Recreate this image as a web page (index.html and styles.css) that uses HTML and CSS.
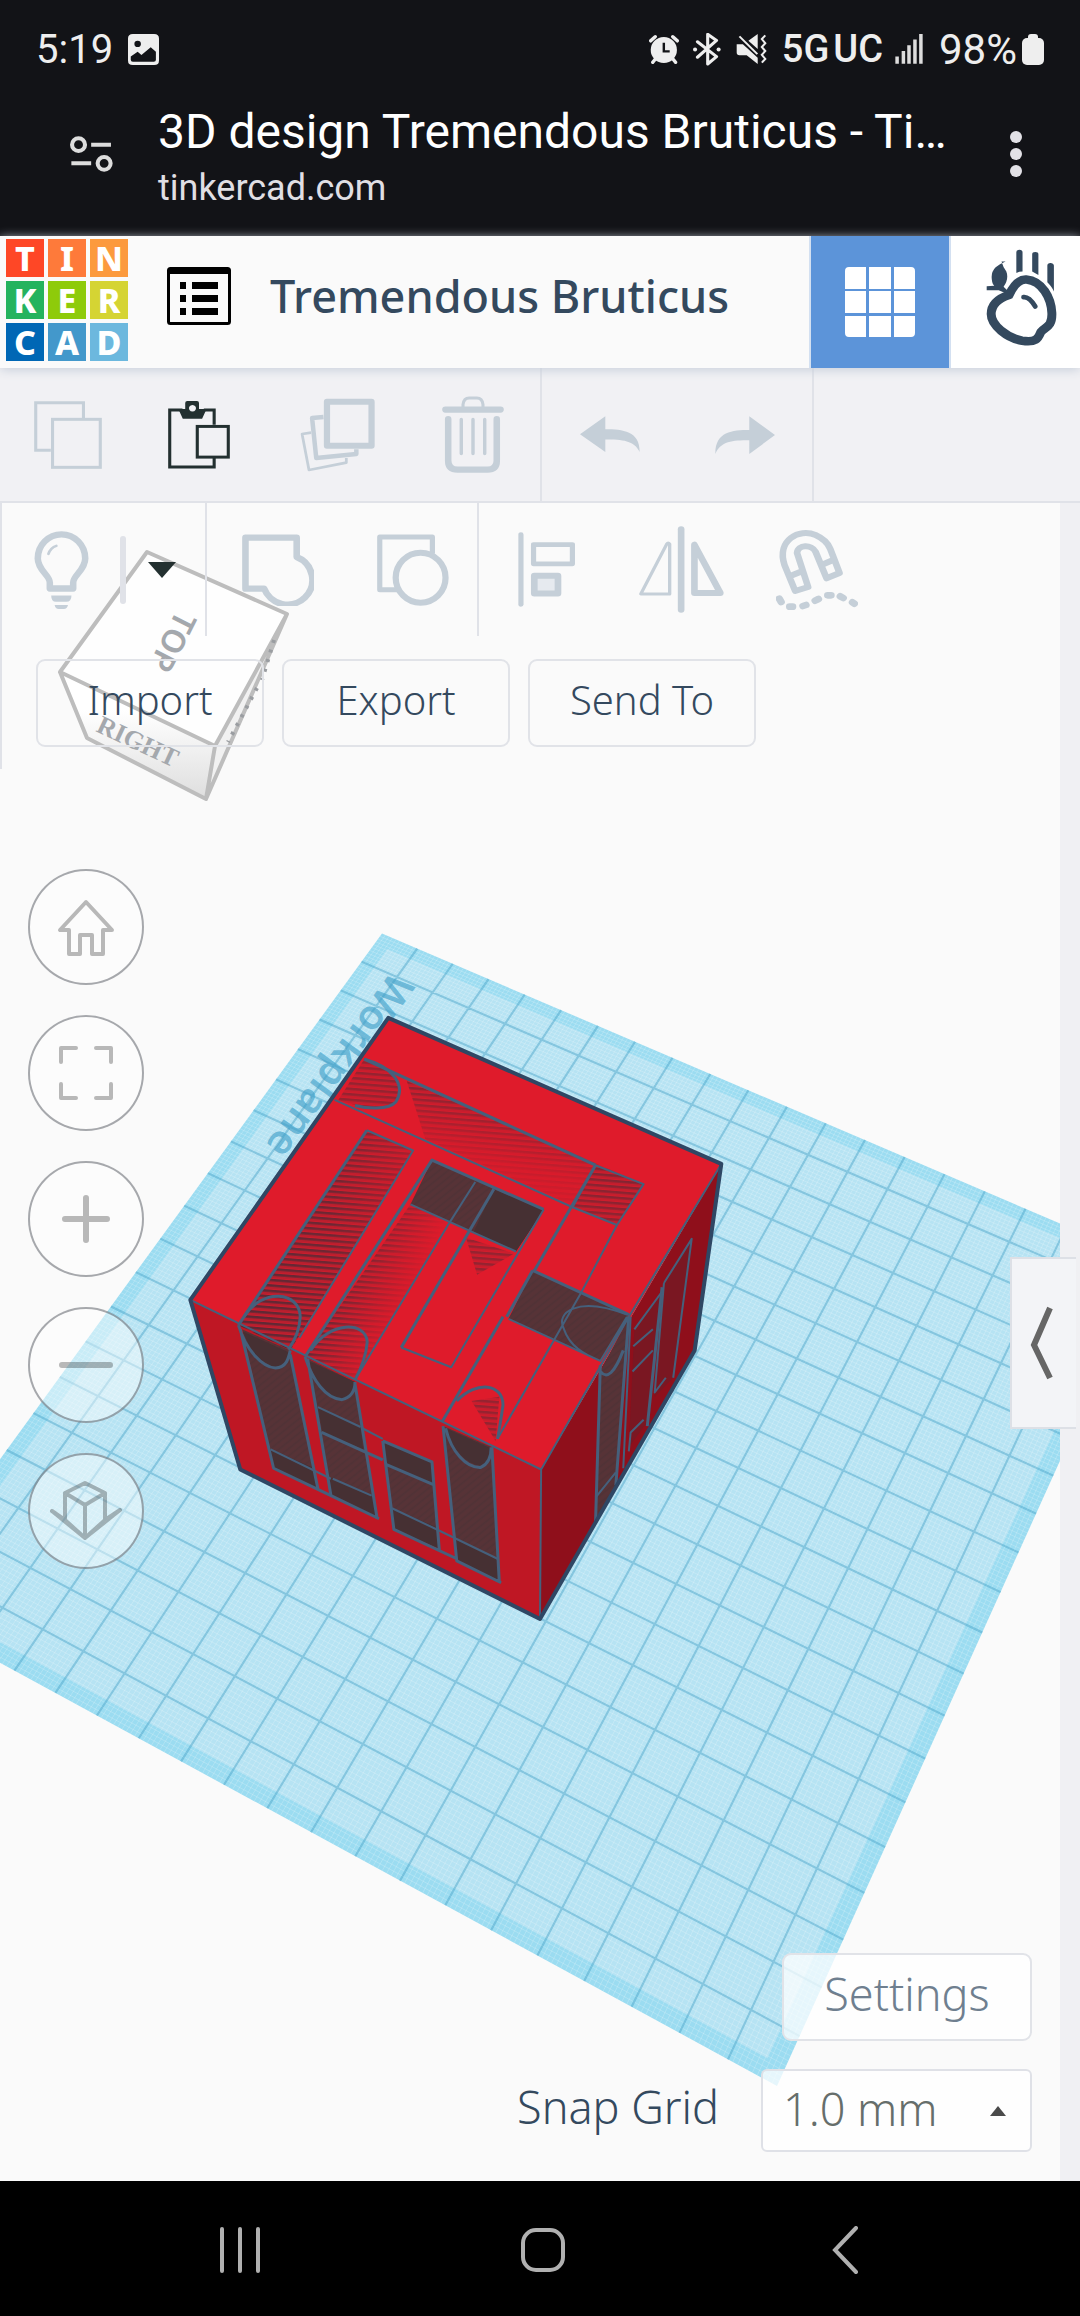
FILE: index.html
```html
<!DOCTYPE html>
<html lang="en">
<head>
<meta charset="utf-8">
<meta name="viewport" content="width=device-width">
<title>3D design Tremendous Bruticus - Tinkercad</title>
<link rel="stylesheet" href="styles.css">
</head>
<body>
<div class="browser">
  <div class="status">
    <span class="clock">5:19</span>
    <svg class="s-photo" viewBox="372 98 90 94" width="31" height="31" preserveAspectRatio="none"><path fill="#eee" fill-rule="evenodd" d="M386 98h62q14 0 14 14v66q0 14-14 14h-62q-14 0-14-14v-66q0-14 14-14zM380 166v10q0 6 6 6h61q6 0 6-6v-24l-15-14-27 24-11-10z"/><circle cx="400" cy="128" r="9.500" fill="#121317"/></svg>
    <span class="spacer"></span>
    <svg class="s-alarm" viewBox="318 102 87 88" width="30" height="30" preserveAspectRatio="none"><g stroke="#eee" stroke-width="10" stroke-linecap="round"><path d="M323 122l13-12M400 122l-13-12M336 176l-7 9M388 176l7 9"/></g><circle cx="361" cy="149" r="38" fill="#eee"/><path d="M361 128v25h17" fill="none" stroke="#121317" stroke-width="7"/></svg>
    <svg class="s-bt" viewBox="447 98 82 98" width="28" height="33" preserveAspectRatio="none"><path d="M460 124l56 44-26 22v-88l26 18-56 50" fill="none" stroke="#eee" stroke-width="9" stroke-linejoin="round" stroke-linecap="round"/><circle cx="453" cy="147" r="6" fill="#eee"/><circle cx="522" cy="147" r="6" fill="#eee"/></svg>
    <svg class="s-mute" viewBox="570 102 90 88" width="31" height="30" preserveAspectRatio="none"><path d="M572 132h18l43 40v18l-32-26h-21q-8 0-8-8zM606 122l27-20v44z" fill="#eee"/><path d="M580 109l52 52" stroke="#eee" stroke-width="6"/><path d="M655 106l-10 11 10 12-10 11 10 12-10 11 10 12-10 11" fill="none" stroke="#eee" stroke-width="6"/></svg>
    <span class="net"><b>5G</b><b>UC</b></span>
    <svg class="s-sig" viewBox="1018 102 80 88" width="28" height="30" preserveAspectRatio="none"><g stroke="#ddd" stroke-width="10"><path d="M1024 168v21M1042 152v37M1058 135v54"/><path d="M1075 118v71M1092 102v87"/></g></svg>
    <span class="pct">98%</span>
    <svg class="s-bat" viewBox="0 0 22 31" width="22" height="31"><rect x="6" width="10" height="8" rx="3" fill="#eee"/><rect y="4" width="22" height="27" rx="5" fill="#eee"/></svg>
  </div>
  <div class="urlbar">
    <button class="plain site" aria-label="Site settings"><svg viewBox="202 408 126 108" width="43" height="36" preserveAspectRatio="none"><g fill="none" stroke="#ddd" stroke-width="12"><circle cx="227" cy="434" r="19"/><circle cx="302" cy="490" r="19"/><path d="M264 434h58M206 490h58"/></g></svg></button>
    <div class="page-id"><div class="page-title">3D design Tremendous Bruticus - Ti…</div><div class="page-host">tinkercad.com</div></div>
    <button class="plain more" aria-label="Menu"><svg viewBox="0 0 12 46" width="12" height="46" fill="#e2e1e6"><circle cx="6" cy="6" r="6"/><circle cx="6" cy="23" r="6"/><circle cx="6" cy="40" r="6"/></svg></button>
  </div>
</div>

<header class="head">
  <a class="logo" href="#" aria-label="Tinkercad"><span class="t1">T</span><span class="t2">I</span><span class="t3">N</span><span class="t4">K</span><span class="t5">E</span><span class="t6">R</span><span class="t7">C</span><span class="t8">A</span><span class="t9">D</span></a>
  <button class="plain list" aria-label="My designs"><svg viewBox="0 0 64 58" width="64" height="58"><rect x="1.500" y="1.500" width="61" height="55" rx="2" fill="none" stroke="#000" stroke-width="3"/><path d="M1 1h62v6H1zM13 15h6v7h-6zM25 15h26v7H25zM13 28h6v7h-6zM25 28h26v7H25zM13 41h6v7h-6zM25 41h26v7H25z"/></svg></button>
  <h1>Tremendous Bruticus</h1>
  <button class="plain mode grid" aria-label="3D view"><svg viewBox="0 0 70 70" width="70" height="70" fill="#fff"><path d="M4 0h17v22H0V4q0-4 4-4zM24 0h22v22H24zM49 0h17q4 0 4 4v18H49zM0 24h21v22H0zM24 24h22v22H24zM49 24h21v22H49zM0 49h21v21H4q-4 0-4-4zM24 49h22v21H24zM49 49h21v17q0 4-4 4H49z"/></svg></button>
  <button class="plain mode sim" aria-label="Sim lab"><svg viewBox="1296 54 206 292" width="71" height="97" preserveAspectRatio="none"><path fill="#34495e" d="M1384 126V64q0-8 9-8t9 8v58q-10 0-18 4zM1430 122V70q0-7 9-7t9 7v62zM1474 154v-50q0-8 9-8t10 8v78q-4-12-19-28zM1341 92q4 16 14 30 8 22-8 46l12 12-4 8-22-10h-35v-12l22-1q-4-3-6-12-6-28 10-44 16-12 29-17z"/><path d="M1363 192q22-48 50-46c46 4 72 56 74 100 2 44-20 42-32 58-8 20-14 32-54 26-44-8-90-46-90-80 0-28 18-46 52-58z" fill="none" stroke="#34495e" stroke-width="26"/><path d="M1405 199q16-2 34 28" fill="none" stroke="#34495e" stroke-width="14" stroke-linecap="round"/></svg></button>
</header>

<nav class="tools tools-top" aria-label="Edit">
  <div class="group">
    <button class="plain tool" aria-label="Copy"><svg viewBox="97 514 198 204" width="68" height="68" preserveAspectRatio="none" fill="none" stroke="#c5cfd8" stroke-width="9"><path d="M146 662h-44V519h139v48"/><rect x="151" y="569" width="139" height="144"/></svg></button>
    <button class="plain tool paste" aria-label="Paste"><svg viewBox="488 513 180 206" width="62" height="68" preserveAspectRatio="none" fill="none" stroke="#233030" stroke-width="9"><path d="M530 540h-37v173h129v-30M622 585v-45h-30"/><path fill="#233030" stroke="none" fill-rule="evenodd" d="M518 537h20v-18q0-6 6-6h28q6 0 6 6v18h22l-13 30h-56zM559 525a10 10 0 1 0 .1 0z"/><rect x="573" y="590" width="90" height="93"/></svg></button>
    <button class="plain tool" aria-label="Duplicate"><svg viewBox="872 514 217 222" width="75" height="74" preserveAspectRatio="none" fill="none" stroke="#c5cfd8" stroke-linejoin="round"><rect x="950" y="525" width="129" height="132" stroke-width="18"/><path d="M940 571l-33 3 12 120 116-12v-14" stroke-width="13"/><path d="M904 618l-26 4 20 108 108-22v-14" stroke-width="8"/></svg></button>
    <button class="plain tool" aria-label="Delete"><svg viewBox="1282 494 180 236" width="62" height="78" preserveAspectRatio="none" fill="none" stroke="#c5cfd8" stroke-linecap="round"><path d="M1343 528v-8q2-20 18-20h22q16 0 18 20v8" stroke-width="9"/><path d="M1292 535h160M1300 564v126q0 27 27 27h87q27 0 27-27V564" stroke-width="19"/><path d="M1338 565v103M1372 565v103M1406 565v103" stroke-width="10"/></svg></button>
  </div>
  <div class="group">
    <button class="plain tool" aria-label="Undo"><svg viewBox="118 556 173 112" width="60" height="37" preserveAspectRatio="none" fill="#c5cfd8"><path d="M118 611l73-54v39c50 0 100 5 99 69-15-35-50-38-99-38v38z"/></svg></button>
    <button class="plain tool" aria-label="Redo"><svg viewBox="504 554 175 114" width="60" height="38" preserveAspectRatio="none" fill="#c5cfd8"><path d="M679 611l-75-56v41c-50 0-100 5-99 72 15-38 50-41 99-41v41z"/></svg></button>
  </div>
</nav>

<main class="workspace">
  <svg class="scene" viewBox="0 503 1060 1678" preserveAspectRatio="xMidYMid slice" aria-hidden="true">
    <defs>
      <pattern id="hatch" width="60" height="13" patternUnits="userSpaceOnUse" patternTransform="rotate(4)"><path d="M0 3h60" stroke="#26303a" stroke-width="6" stroke-opacity=".8"/><path d="M0 9h60" stroke="#26303a" stroke-width="6" stroke-opacity=".25"/></pattern>
      <pattern id="weave" width="14" height="14" patternUnits="userSpaceOnUse" patternTransform="rotate(-35)"><rect width="14" height="14" fill="#573337"/><path d="M0 4h14" stroke="#513236" stroke-width="5"/></pattern>
      <linearGradient id="fadeB" x1="0" y1="0" x2="1" y2="0"><stop offset="0" stop-color="#fff" stop-opacity=".9"/><stop offset=".55" stop-color="#fff" stop-opacity=".75"/><stop offset="1" stop-color="#fff" stop-opacity=".35"/></linearGradient>
      <linearGradient id="fadeA" x1="0" y1="1" x2=".35" y2="0"><stop offset="0" stop-color="#fff" stop-opacity="0"/><stop offset=".5" stop-color="#fff" stop-opacity=".15"/><stop offset="1" stop-color="#fff" stop-opacity=".7"/></linearGradient>
      <linearGradient id="fadeC" gradientUnits="userSpaceOnUse" x1="470" y1="700" x2="640" y2="790"><stop offset="0" stop-color="#fff" stop-opacity=".8"/><stop offset="1" stop-color="#fff" stop-opacity="0"/></linearGradient>
      <mask id="mB" maskUnits="userSpaceOnUse" x="0" y="0" width="1568" height="1568"><path fill="url(#fadeB)" d="M532 357L657 405 325 880 185 820z"/></mask>
      <mask id="mA" maskUnits="userSpaceOnUse" x="0" y="0" width="1568" height="1568"><path fill="url(#fadeA)" d="M640 240L1280 485 1208 582 690 378z"/><path fill="url(#fadeC)" d="M650 533L755 577 500 950 365 895z"/><path fill="#fff" fill-opacity=".5" d="M525 188C600 205 640 250 610 290 590 310 520 305 455 285zM1150 440L1280 485 1208 582 1088 540zM800 612L930 650 830 700zM815 1000L890 990 880 1095z"/></mask>
      <linearGradient id="cubeSide" x1="0" y1="0" x2="0" y2="1"><stop offset=".3" stop-color="#fff"/><stop offset="1" stop-color="#dedede"/></linearGradient>
    </defs>

    <g id="plane">
      <path fill="#9bdcf1" d="M382 933.500L1150 1262 777 2086-106 1605z"/>
      <path id="inner" fill="#b6e3f3"/>
      <path id="mesh" class="mesh"/>
      <path id="lines" class="lines"/>
      <text class="plane-name" transform="translate(392 970) rotate(126)">Workplane</text>
    </g>

    <g class="model" transform="translate(170 980) scale(.37 .4209)">
      <path fill="#df1b2b" d="M590 90L1490 437 1003 1163 55 760z"/>
      <path fill="#bf1724" d="M55 760L1003 1163 1000 1518 190 1163z"/>
      <path fill="#8f0f1b" d="M1490 437L1418 880 1000 1518 1003 1163z"/>
      <rect width="1568" height="1568" fill="url(#hatch)" mask="url(#mB)"/>
      <rect width="1568" height="1568" fill="url(#hatch)" mask="url(#mA)"/>
      <path fill="url(#weave)" d="M708 428L1010 545 935 645 650 533zM980 690L1240 795 1163 905 915 805zM195 830L325 880 400 1210 280 1160zM372 900L500 955 560 1280 435 1225zM575 1095L708 1145 725 1350 605 1305zM740 1060L870 1110 890 1430 775 1380zM1163 930L1238 805 1205 1200 1150 1285z"/>
      <path fill="#463033" d="M875 497L1010 545 935 645 820 600zM272 1115L390 1160 400 1210 280 1160zM400 1015L515 1062 522 1115 412 1075zM430 1180L550 1225 560 1280 435 1225zM575 1095L708 1145 715 1200 582 1150zM600 1255L720 1300 725 1350 605 1305zM772 1325L885 1375 890 1430 775 1380zM197 835L322 885C315 930 290 930 260 910 220 890 210 860 197 835zM374 905L500 955C495 1000 470 1005 440 990 400 970 385 930 374 905zM745 1065L865 1112C865 1155 840 1160 810 1145 770 1125 755 1090 745 1065z"/>
      <path fill="#741924" d="M1255 830L1330 740 1290 1050 1240 1110zM1335 720L1410 615 1360 945 1310 990z" opacity=".8"/>
      <g class="edge thick">
        <path d="M185 820L532 357M365 895L708 428 1010 545M525 188L1150 440M875 497L625 873M1150 440L985 690M900 800L735 1050M980 690L1240 795M980 690L910 800M185 820C205 880 250 920 285 922 315 920 320 900 325 880M365 895C385 950 420 995 465 997 495 990 500 970 500 955M745 1065C760 1120 800 1160 840 1158 860 1150 868 1130 868 1110M190 830L280 1160 435 1225M325 890L400 1210M372 900L435 1225 565 1280M500 960L560 1280M410 1075L575 1140M575 1095L708 1145 728 1355M575 1095L605 1305 775 1375M582 1150L715 1200M738 1060L775 1380 895 1432M870 1110L890 1430"/>
        <path d="M200 800C250 730 350 740 352 800Q350 840 320 878M380 880C430 810 530 810 533 860Q530 900 500 950M775 1000C830 950 900 960 900 1010Q890 1070 885 1090M1163 915L1150 1290M1240 800L1205 1200M1330 730L1290 1060M525 188C600 205 640 250 610 290 590 310 530 305 500 298M1163 930Q1190 960 1225 880"/>
      </g>
      <g class="edge">
        <path d="M1150 440L1280 485 1208 582 1110 745M445 285L1088 540 1208 582M1150 440L1088 540M532 357L657 405 350 850M825 480L755 577 500 950M650 533L935 645M1010 545L760 920 625 873M915 805L1163 905 1235 800M1110 745L885 1090M1235 795C1100 750 1040 790 1065 830 1080 870 1120 890 1163 905M272 1115L435 1185M400 1015L515 1062M440 1185L545 1225M520 1065L575 1090M600 1255L720 1305 885 1375M1240 800L1490 437M55 760L1003 1163 1240 800M1003 1163L1000 1518"/>
        <path d="M1335 720L1410 615 1360 945M1335 720L1310 980 1340 945M1255 830L1330 740M1252 870L1305 830M1250 930L1305 880M1240 1120L1245 1075 1280 1045M1245 800L1225 1160M1150 1230L1205 1170"/>
      </g>
      <path class="outline" d="M590 90L1490 437 1418 880 1000 1518 190 1163 55 760z"/>
    </g>

    <g class="cube">
      <path fill="url(#cubeSide)" d="M60 672L215 746 206 799 87 738z"/>
      <path fill="#f1f1f1" d="M287 614L215 746 206 799z"/>
      <path fill="#fefefe" d="M147 552L287 614 215 746 60 672z"/>
      <path class="cube-edge" d="M147 552L287 614 215 746 60 672zM60 672L87 738 206 799 215 746M287 614L206 799"/>
      <path d="M274 640L262 680M257 688L228 742" stroke="#9a9da1" stroke-width="4" stroke-dasharray="3 7"/>
      <text class="cube-top" transform="translate(177 609) rotate(117)">TOP</text>
      <text class="cube-right" transform="translate(95 731) rotate(25)">RIGHT</text>
    </g>
  </svg>

  <div class="sub">
    <div class="tools tools-low">
      <div class="group light">
        <button class="plain bulb" aria-label="Show all"><svg viewBox="98 98 160 236" width="55" height="78" preserveAspectRatio="none" fill="none" stroke="#c5cfd8"><path d="M144 272v-18c0-22-35-38-35-73a68 72 0 0 1 138 0c0 35-35 51-35 73v18z" stroke-width="19" stroke-linejoin="round"/><path d="M140 167q6-18 23-24" stroke-width="8" stroke-linecap="round"/><path fill="#c5cfd8" stroke="none" d="M148 293h59q0 19-15 19h-30q-14 0-14-19zM158 322h39q-3 12-12 12h-15q-10 0-12-12z"/></svg></button>
        <span class="bar"></span>
        <button class="plain caret" aria-label="More visibility options"><svg viewBox="0 0 28 16" width="28" height="16"><path d="M0 0h28L14 16z" fill="#233030"/></svg></button>
      </div>
      <div class="group pair">
        <button class="plain tool" aria-label="Group"><svg viewBox="698 118 208 216" width="72" height="72" preserveAspectRatio="none" fill="none" stroke="#c5cfd8" stroke-width="19" stroke-linejoin="round"><path d="M708 129h148v58a72 74 0 1 1-94 95h-54z"/></svg></button>
        <button class="plain tool" aria-label="Ungroup"><svg viewBox="1100 118 208 216" width="72" height="72" preserveAspectRatio="none" fill="none" stroke="#c5cfd8" stroke-linejoin="round"><path d="M1158 285h-50V127h152v50" stroke-width="15"/><ellipse cx="1226" cy="249" rx="72" ry="75" stroke-width="18"/></svg></button>
      </div>
      <div class="group last">
        <button class="plain tool" aria-label="Align"><svg viewBox="54 98 154 226" width="57" height="75" preserveAspectRatio="none" fill="none" stroke="#c5cfd8" stroke-linejoin="round"><path d="M62 106v210" stroke-width="14" stroke-linecap="round"/><rect x="96" y="136" width="105" height="58" stroke-width="14"/><rect x="98" y="230" width="64" height="53" stroke-width="18" fill="#e6eaef"/></svg></button>
        <button class="plain tool" aria-label="Mirror"><svg viewBox="376 84 230 260" width="85" height="87" preserveAspectRatio="none" fill="none" stroke="#c5cfd8" stroke-linejoin="round"><path d="M381 287h78V138q-4-6-8 0z" stroke-width="9"/><path d="M490 94v240" stroke-width="18" stroke-linecap="round"/><path d="M526 284h70L526 140z" stroke-width="18"/></svg></button>
        <button class="plain tool" aria-label="Snap"><svg viewBox="745 88 222 246" width="82" height="82" preserveAspectRatio="none" fill="none" stroke="#c5cfd8" stroke-linejoin="round"><path d="M797 274L768 196C746 120 808 86 852 106 876 118 886 130 892 148L917 220 882 236 852 156C842 134 804 134 802 160L832 262zM782 230l30-14M868 196l30-14" stroke-width="18"/><path d="M754 297l5 10M782 321h8M818 319l8-3M851 303l9-5M885 287h9M919 290l8 5M952 308l5 4" stroke-width="20" stroke-linecap="round"/></svg></button>
      </div>
    </div>
    <div class="actions">
      <button class="btn">Import</button>
      <button class="btn">Export</button>
      <button class="btn">Send To</button>
    </div>
  </div>

  <div class="camera">
    <button class="round" aria-label="Home view"><svg viewBox="0 0 58 58" width="58" height="58"><path d="M29 4L3 32h9v24h11V37h12v19h11V32h9z"/></svg></button>
    <button class="round" aria-label="Fit all in view"><svg viewBox="0 0 58 58" width="58" height="58"><path d="M4 18V4h15M39 4h15v14M54 40v14H39M19 54H4V40"/></svg></button>
    <button class="round" aria-label="Zoom in"><svg viewBox="0 0 58 58" width="58" height="58"><path d="M29 8v42M8 29h42" stroke-width="6"/></svg></button>
    <button class="round" aria-label="Zoom out"><svg viewBox="0 0 58 58" width="58" height="58"><path d="M5 29h48" stroke-width="6"/></svg></button>
    <button class="round" aria-label="Switch to flat view"><svg viewBox="0 0 72 62" width="72" height="62"><path d="M35 3L15 13v27l20 18 20-18V13zM15 13l20 12 20-12M35 25v33M15 40L2 31M55 40l15-10M2 31l33 27 35-28"/></svg></button>
  </div>

  <button class="plain drawer" aria-label="Open shapes panel"><svg viewBox="0 0 24 74" width="24" height="74"><path d="M20 2L4 39 20 72" fill="none" stroke="#666" stroke-width="6"/></svg></button>

  <div class="grid-controls">
    <button class="btn settings">Settings</button>
    <div class="snap">
      <label for="snap">Snap Grid</label>
      <div class="select"><select id="snap"><option>1.0 mm</option></select><svg viewBox="0 0 16 10" width="16" height="10"><path d="M8 0l8 10H0z" fill="#4a4a4a"/></svg></div>
    </div>
  </div>
</main>

<nav class="android" aria-label="System">
  <button class="plain recents" aria-label="Recents"><svg viewBox="0 0 42 46" width="42" height="46"><path d="M3 2v42M21 2v42M39 2v42"/></svg></button>
  <button class="plain" aria-label="Home"><svg viewBox="0 0 46 46" width="46" height="46"><rect x="3" y="3" width="40" height="40" rx="13"/></svg></button>
  <button class="plain back" aria-label="Back"><svg viewBox="0 0 26 48" width="26" height="48"><path d="M24 2L3 24l21 22"/></svg></button>
</nav>
<script src="plane.js"></script>
</body>
</html>
```
FILE: styles.css
```css
* { box-sizing: border-box; }
html, body { margin: 0; }
body {
  min-height: 100vh;
  display: flex;
  flex-direction: column;
  background: #fafafa;
  font-family: "Noto Sans", "Open Sans", sans-serif;
  color: #34495e;
}
svg { display: block; flex: none; }
.plain {
  border: 0;
  padding: 0;
  background: none;
  display: flex;
  align-items: center;
  justify-content: center;
}

/* Browser chrome */
.browser { background: #121317; height: 236px; font-family: Roboto, sans-serif; color: #eee; }
.status { display: flex; align-items: center; height: 98px; padding: 0 36px; }
.clock { font-size: 40px; margin-right: 15px; }
.spacer { flex: 1; }
.s-bt { margin: 0 15px 0 14px; }
.net { display: flex; gap: 4px; margin: 0 12px 0 15px; font-size: 38px; }
.net b { font-weight: 500; }
.pct { font-size: 42px; margin: 0 5px 0 16px; }
.urlbar { display: flex; align-items: center; height: 112px; padding: 0 58px 0 70px; }
.page-id { flex: 1; min-width: 0; margin: 0 16px 0 45px; }
.page-title { font-size: 48px; line-height: 68px; color: #fff; white-space: nowrap; }
.page-host { font-size: 36px; line-height: 44px; color: #e0dfe4; }

/* App header */
.head {
  display: flex;
  align-items: center;
  height: 132px;
  background: #fafafa;
  position: relative;
  z-index: 1;
  box-shadow: 0 2px 10px #c8cfdb;
}
.logo {
  display: grid;
  grid-template-columns: repeat(3, 38px);
  grid-auto-rows: 38px;
  gap: 4px;
  margin: 0 0 4px 6px;
  text-decoration: none;
  color: #fff;
  font-size: 34px;
  font-weight: 800;
  line-height: 38px;
  text-align: center;
}
.t1 { background: #fe4726; } .t2 { background: #fe7a3a; } .t3 { background: #fc9a3d; }
.t4 { background: #24b35e; } .t5 { background: #8ecb0a; } .t6 { background: #d5d433; }
.t7 { background: #0067b5; } .t8 { background: #4398cb; } .t9 { background: #6cb8de; }
.list { margin: 0 39px 12px; }
h1 { flex: 1; margin: 0 0 12px; font-size: 45px; font-weight: 500; line-height: 60px; white-space: nowrap; }
.mode { align-self: stretch; }
.mode.grid { width: 142px; background: #5c94d9; border: solid #d3e0f1; border-width: 0 2px; }
.mode.sim { width: 129px; padding: 0 0 10px 12px; background: #fff; }

/* Toolbars */
.tools { display: flex; }
.group { display: flex; align-items: center; border-right: 2px solid #e0e2e8; }
.tool { width: 135px; height: 133px; }
.paste { padding-right: 8px; }
.tools-top { background: #f1f1f4; border-bottom: 2px solid #e0e2e8; }
.sub { border-left: 2px solid #e0e2e8; position: relative; align-self: stretch; }
.group.light { width: 205px; padding-left: 32px; }
.pair .tool { padding-left: 6px; }
.group.last { border: 0; }
.bar { width: 6px; height: 68px; margin: 0 22px 0 31px; border-radius: 3px; background: #e0e2e8; }
.actions { display: flex; gap: 18px; padding: 23px 34px 22px; }
.btn {
  width: 228px;
  height: 88px;
  padding: 0 0 8px;
  border: 2px solid #e1e3e8;
  border-radius: 9px;
  background: none;
  color: #34495e;
  font: 300 40px "Noto Sans", sans-serif;
}

/* Workspace */
.workspace {
  flex: 1;
  position: relative;
  display: flex;
  flex-direction: column;
  align-items: flex-start;
  border-right: 20px solid #f0f0f3;
  padding-bottom: 29px;
}
.scene { position: absolute; inset: 0; width: 100%; height: 100%; }
.mesh { fill: none; stroke: #fff; stroke-width: 1; stroke-opacity: .2; }
.lines { fill: none; stroke: #2b93bf; stroke-width: 2; stroke-opacity: .4; }
.plane-name { font: 600 41px "Noto Sans", sans-serif; fill: #3f9fc8; fill-opacity: .65; }
.edge path { fill: none; stroke: #45607c; stroke-width: 2px; vector-effect: non-scaling-stroke; stroke-linejoin: round; }
.edge.thick path { stroke-width: 3px; }
.outline { fill: none; stroke: #2f4764; stroke-width: 4px; vector-effect: non-scaling-stroke; stroke-linejoin: round; }
.cube-edge { fill: none; stroke: #bdbdbd; stroke-width: 4; stroke-linejoin: round; }
.cube-top { font: 600 32px "Noto Sans", sans-serif; fill: #a4a8ad; }
.cube-right { font: 600 26px "Liberation Serif", serif; fill: #a4a8ad; }

.camera { position: relative; display: flex; flex-direction: column; gap: 30px; margin: 100px 0 0 28px; }
.round {
  width: 116px;
  height: 116px;
  padding: 0;
  display: flex;
  align-items: center;
  justify-content: center;
  border: 2px solid rgba(60, 64, 74, .45);
  border-radius: 50%;
  background: rgba(255, 255, 255, .45);
}
.round path { fill: none; stroke: #000; stroke-opacity: .27; stroke-width: 4; stroke-linecap: round; stroke-linejoin: round; }
.round path[stroke-width] { stroke-width: 6; }

.drawer {
  position: absolute;
  right: -16px;
  top: 754px;
  width: 66px;
  height: 172px;
  padding-right: 4px;
  background: #f3f4f7;
  border: solid #dde0e6;
  border-width: 2px 0 2px 2px;
}
.grid-controls {
  position: relative;
  align-self: flex-end;
  display: flex;
  flex-direction: column;
  align-items: flex-end;
  gap: 28px;
  margin: auto 28px 0 0;
}
.btn.settings { width: 250px; font-size: 45px; color: #6f7f8f; background: rgba(255, 255, 255, .75); }
.snap { display: flex; align-items: center; font-weight: 300; font-size: 45px; }
.snap label { padding-bottom: 8px; margin-right: 42px; }
.select { position: relative; width: 271px; height: 83px; }
.select select {
  appearance: none;
  width: 100%;
  height: 100%;
  padding: 0 20px 4px;
  border: 2px solid #dfe1e7;
  border-radius: 6px;
  background: rgba(255, 255, 255, .75);
  color: #666e6b;
  font: 300 45px "Noto Sans", sans-serif;
}
.select svg { position: absolute; right: 26px; top: 37px; pointer-events: none; }

/* System navigation */
.android { display: flex; align-items: center; justify-content: space-between; height: 135px; padding: 2px 205px 0 210px; background: #000; }
.android button { width: 60px; }
.android svg { fill: none; stroke: #b0b0b0; stroke-width: 4; stroke-linecap: round; }
```
FILE: plane.js
```js
// Projects the 20 x 20 workplane grid onto its four screen corners.
(function () {
  var c = [[382, 933.5], [1150, 1262], [777, 2086], [-106, 1605]];
  var dx1 = c[1][0] - c[2][0], dx2 = c[3][0] - c[2][0];
  var dy1 = c[1][1] - c[2][1], dy2 = c[3][1] - c[2][1];
  var sx = c[0][0] - c[1][0] + c[2][0] - c[3][0];
  var sy = c[0][1] - c[1][1] + c[2][1] - c[3][1];
  var det = dx1 * dy2 - dx2 * dy1;
  var g = (sx * dy2 - dx2 * sy) / det, h = (dx1 * sy - sx * dy1) / det;
  function at(u, v) {
    var w = g * u + h * v + 1;
    var x = ((c[1][0] - c[0][0] + g * c[1][0]) * u + (c[3][0] - c[0][0] + h * c[3][0]) * v + c[0][0]) / w;
    var y = ((c[1][1] - c[0][1] + g * c[1][1]) * u + (c[3][1] - c[0][1] + h * c[3][1]) * v + c[0][1]) / w;
    return x.toFixed(1) + " " + y.toFixed(1);
  }
  function grid(n) {
    var d = "";
    for (var i = 1; i < n; i++) {
      var t = i / n;
      d += "M" + at(t, 0) + "L" + at(t, 1) + "M" + at(0, t) + "L" + at(1, t);
    }
    return d;
  }
  document.getElementById("lines").setAttribute("d", grid(20));
  document.getElementById("mesh").setAttribute("d", grid(200));
  var a = 0.018, b = 1 - a;
  document.getElementById("inner").setAttribute("d", "M" + at(a, a) + "L" + at(b, a) + "L" + at(b, b) + "L" + at(a, b) + "z");
})();
```
